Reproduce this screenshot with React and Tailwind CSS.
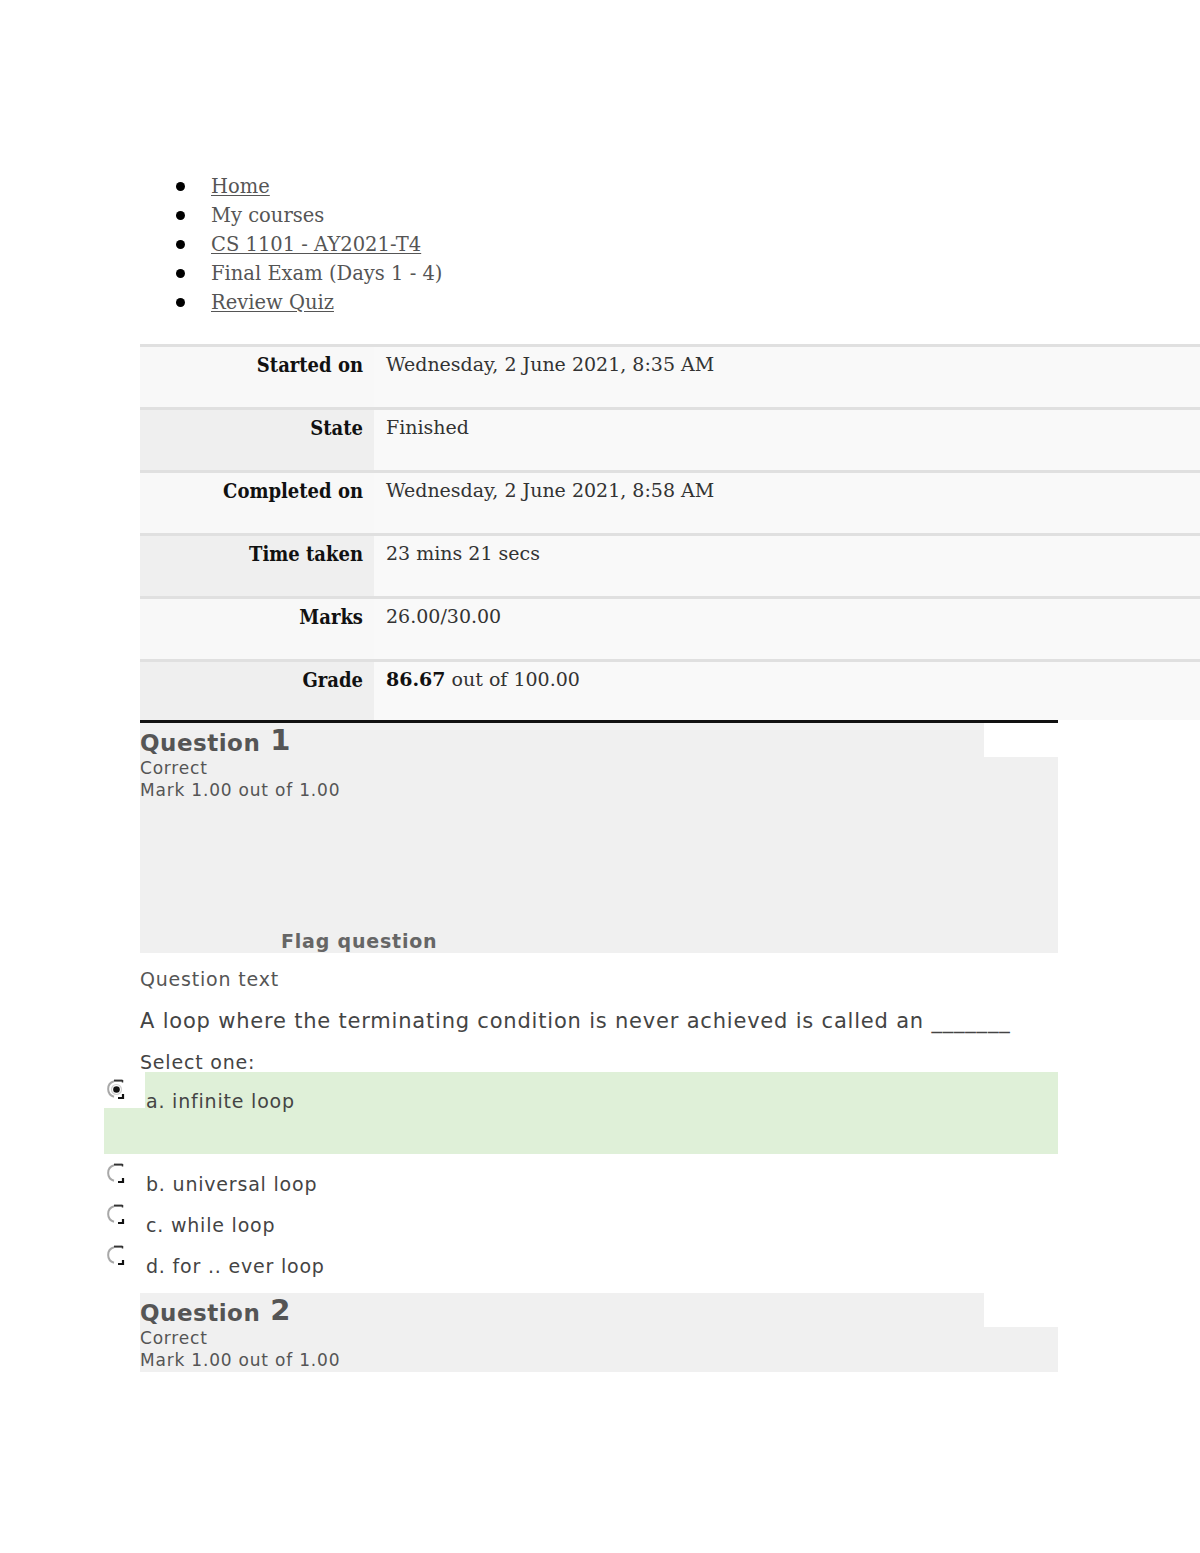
import React from 'react';

const NAV_ITEMS = [
  { label: 'Home', link: true },
  { label: 'My courses', link: false },
  { label: 'CS 1101 - AY2021-T4', link: true },
  { label: 'Final Exam (Days 1 - 4)', link: false },
  { label: 'Review Quiz', link: true },
];

const SUMMARY_ROWS = [
  { label: 'Started on', value: 'Wednesday, 2 June 2021, 8:35 AM', shaded: false },
  { label: 'State', value: 'Finished', shaded: true },
  { label: 'Completed on', value: 'Wednesday, 2 June 2021, 8:58 AM', shaded: false },
  { label: 'Time taken', value: '23 mins 21 secs', shaded: true },
  { label: 'Marks', value: '26.00/30.00', shaded: false },
  { label: 'Grade', value: null, shaded: true },
];

const ANSWERS = [
  { id: 'a', text: 'a. infinite loop', checked: true },
  { id: 'b', text: 'b. universal loop', checked: false },
  { id: 'c', text: 'c. while loop', checked: false },
  { id: 'd', text: 'd. for .. ever loop', checked: false },
];

const serif = "font-['DejaVu_Serif',serif]";
const serifCondensed = "font-['DejaVu_Serif_Condensed','DejaVu_Serif',serif]";
const sans = "font-['DejaVu_Sans',sans-serif] tracking-[0.8px]";

// broken-looking radio button, as it shows in the printed page
const RadioGlyph = ({ checked }) => (
  <svg width="26" height="26" viewBox="0 0 26 26" className="shrink-0">
    <path d="M12 5.3 A8 8 0 0 0 12 20.7" fill="none" stroke="#a8a8a8" strokeWidth="2" />
    <path d="M12 4.6 H20.5" fill="none" stroke="#333" strokeWidth="2" />
    <path d="M20.5 4 V6.5" fill="none" stroke="#333" strokeWidth="1.5" />
    <path d="M16 22 H21 V18" fill="none" stroke="#111" strokeWidth="2.2" />
    {checked && (
      <>
        <circle cx="14.5" cy="13.5" r="5" fill="none" stroke="#d0d0d0" strokeWidth="1.2" />
        <circle cx="14.5" cy="13.5" r="3.3" fill="#111" />
      </>
    )}
  </svg>
);

const QuestionHeader = ({ number, tall }) => (
  <div className={`w-[918px] ${sans} text-[#555]`}>
    <div className="w-[844px] h-[34px] bg-[#f0f0f0] flex items-end pb-[2px]">
      <span className="text-[23px] font-bold leading-none tracking-[0.5px]">Question</span>
      <span className="text-[29px] font-bold leading-none ml-[10px]">{number}</span>
    </div>
    <div className={`bg-[#f0f0f0] flex flex-col ${tall ? 'h-[196px]' : 'h-[45px]'}`}>
      <span className="text-[17px] leading-[22px]">Correct</span>
      <span className="text-[17px] leading-[22px]">Mark 1.00 out of 1.00</span>
      {tall && (
        <div className="flex-1 flex items-end pl-[141px]">
          <span className="text-[19px] font-bold text-[#666] leading-[24px]">Flag question</span>
        </div>
      )}
    </div>
  </div>
);

export default function App() {
  return (
    <div className="w-[1200px] h-[1553px] bg-white overflow-hidden">
      <ul className={`pt-[172px] pl-[211px] ${serif} text-[19.5px] leading-[29px] text-[#555]`}>
        {NAV_ITEMS.map((item) => (
          <li key={item.label} className="flex items-center relative">
            <span className="absolute left-[-35px] w-[9px] h-[9px] rounded-full bg-black" />
            <span className={item.link ? 'underline underline-offset-2' : ''}>{item.label}</span>
          </li>
        ))}
      </ul>

      <div className="pl-[140px] mt-[27px]">
        <div className="text-[19px]">
          {SUMMARY_ROWS.map((row, index) => (
            <div
              key={row.label}
              className={`flex border-t-[3px] border-[#e0e0e0] ${index === SUMMARY_ROWS.length - 1 ? 'h-[61px]' : 'h-[63px]'}`}
            >
              <div
                className={`w-[234px] shrink-0 text-right pr-[11px] pt-[3px] font-bold text-[20px] text-[#111] ${serifCondensed} ${row.shaded ? 'bg-[#efefef]' : 'bg-[#f8f8f8]'}`}
              >
                {row.label}
              </div>
              <div className={`flex-1 bg-[#f9f9f9] pl-[12px] pt-[3px] text-[#333] ${serif}`}>
                {row.value ?? (
                  <span>
                    <b className="text-[#111]">86.67</b> out of 100.00
                  </span>
                )}
              </div>
            </div>
          ))}
        </div>

        <div className="w-[918px] h-[3px] bg-[#111]" />

        <QuestionHeader number={1} tall />

        <div className={`${sans} text-[#555] w-[918px]`}>
          <p className="text-[19px] mt-[13px] leading-[26px]">Question text</p>
          <p className="text-[21px] mt-[15px] leading-[28px] text-[#444]">
            A loop where the terminating condition is never achieved is called an _______
          </p>
          <p className="text-[19px] mt-[14px] leading-[26px] text-[#444]">Select one:</p>
        </div>

        <div className={`${sans} text-[19px] text-[#444] -ml-[40px] -mt-[3px] w-[958px]`}>
          {ANSWERS.map((answer) =>
            answer.checked ? (
              <div key={answer.id} className="relative h-[82px] mb-[2px]">
                <div className="absolute left-[45px] top-0 right-0 h-[36px] bg-[#dff0d8]" />
                <div className="absolute left-[4px] top-[36px] right-0 bottom-0 bg-[#dff0d8]" />
                <div className="relative flex items-start">
                  <div className="pt-[4px] pl-[2px]">
                    <RadioGlyph checked />
                  </div>
                  <span className="ml-[18px] pt-[17px] leading-[24px]">{answer.text}</span>
                </div>
              </div>
            ) : (
              <div key={answer.id} className="flex items-start h-[41px]">
                <div className="pt-[4px] pl-[2px]">
                  <RadioGlyph />
                </div>
                <span className="ml-[18px] pt-[16px] leading-[24px]">{answer.text}</span>
              </div>
            )
          )}
        </div>

        <div className="mt-[14px]">
          <QuestionHeader number={2} />
        </div>
      </div>
    </div>
  );
}
